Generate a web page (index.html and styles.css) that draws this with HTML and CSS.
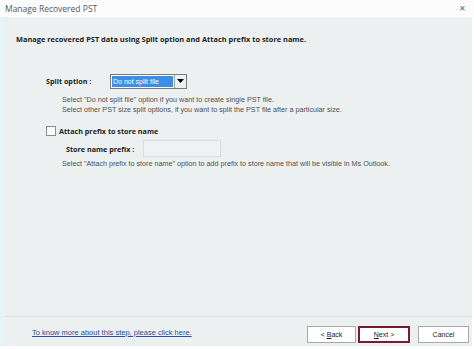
FILE: index.html
```html
<!DOCTYPE html>
<html lang="en">

<head>
    <meta charset="UTF-8">
    <meta name="viewport" content="width=device-width, initial-scale=1.0">
    <link rel="stylesheet" href="styles.css">
</head>

<body>
    <div class="window">
        <div class="titlebar">
            <span class="title">Manage Recovered PST</span>
            <span class="close">&#x2715;</span>
        </div>
        <div class="panel">
            <div class="content">
                <div class="heading">Manage recovered PST data using Split option and Attach prefix to store name.</div>

                <div class="split-row">
                    <span class="label">Split option :</span>
                    <div class="select">
                        <span class="select-value">Do not split file</span>
                        <span class="select-arrow">
                            <svg width="7" height="4" viewBox="0 0 7 4"><path d="M0 0h7L3.5 4z" fill="#000"/></svg>
                        </span>
                    </div>
                </div>
                <div class="hint hint-split">
                    Select "Do not split file" option if you want to create single PST file.<br>
                    Select other PST size split options, if you want to split the PST file after a particular size.
                </div>

                <div class="check-row">
                    <span class="checkbox"></span>
                    <span class="label">Attach prefix to store name</span>
                </div>
                <div class="prefix-row">
                    <span class="label">Store name prefix :</span>
                    <span class="input"></span>
                </div>
                <div class="hint hint-prefix">
                    Select "Attach prefix to store name" option to add prefix to store name that will be visible in Ms Outlook.
                </div>
            </div>

            <div class="footer">
                <a class="help-link" href="#">To know more about this step, please click here.</a>
                <div class="buttons">
                    <button class="btn btn-back">&lt; <u>B</u>ack</button>
                    <button class="btn btn-next"><u>N</u>ext &gt;</button>
                    <button class="btn btn-cancel">Cancel</button>
                </div>
            </div>
        </div>
    </div>
</body>

</html>
```

FILE: styles.css
```css
html,
body {
    margin: 0;
    padding: 0;
    background: #ffffff;
}

.window {
    width: 474px;
    height: 349px;
    display: flex;
    flex-direction: column;
    font-family: 'Liberation Sans', Arial, sans-serif;
}

.titlebar {
    height: 17px;
    display: flex;
    align-items: center;
    justify-content: space-between;
    padding: 0 8px 0 5px;
    background: #fcfcfc;
}

.title {
    font-family: 'Open Sans', sans-serif;
    font-size: 8.5px;
    color: #555a5e;
}

.close {
    font-size: 8px;
    color: #666666;
}

.panel {
    flex: 1;
    margin: 0 2px 3px 0;
    display: flex;
    flex-direction: column;
    background: #ecf0f1;
    border-left: 5px solid #e4f4f7;
}

.content {
    flex: 1;
    padding: 17px 0 0 11px;
}

.heading {
    font-family: 'Open Sans', sans-serif;
    font-weight: bold;
    font-size: 7.4px;
    color: #1c1c1c;
    height: 14px;
}

.label {
    font-family: 'Open Sans', sans-serif;
    font-weight: bold;
    font-size: 7.2px;
    color: #222222;
}

.split-row {
    display: flex;
    align-items: center;
    margin: 26px 0 0 30px;
    height: 14px;
}

.split-row .label {
    width: 64px;
}

.select {
    display: flex;
    width: 75px;
    height: 13px;
    border: 1px solid #7a7a7a;
    background: #ffffff;
}

.select-value {
    flex: 1;
    margin: 1px;
    padding-left: 1px;
    background: #3d8ee6;
    color: #ffffff;
    font-size: 7px;
    line-height: 11px;
}

.select-arrow {
    width: 11px;
    display: flex;
    align-items: center;
    justify-content: center;
    border-left: 1px solid #a0a0a0;
    background: #f0f0f0;
}

.hint {
    margin-left: 46px;
    font-size: 7.2px;
    line-height: 10px;
    color: #505050;
}

.hint-split {
    margin-top: 7px;
}

.check-row {
    display: flex;
    align-items: center;
    margin: 10px 0 0 30px;
    height: 12px;
    gap: 3px;
}

.checkbox {
    width: 8px;
    height: 8px;
    border: 1px solid #8a8a8a;
    background: #ffffff;
}

.prefix-row {
    display: flex;
    align-items: center;
    margin: 3px 0 0 50px;
    height: 17px;
}

.prefix-row .label {
    width: 77px;
}

.input {
    width: 76px;
    height: 15px;
    border: 1px solid #dadde0;
    background: #eff2f3;
}

.hint-prefix {
    margin-top: 2px;
}

.footer {
    height: 30px;
    display: flex;
    align-items: flex-end;
    justify-content: space-between;
    padding: 0 3px 3px 27px;
    box-sizing: border-box;
    border-top: 1px solid #dde2e4;
}

.help-link {
    margin-bottom: 6px;
    font-size: 7.5px;
    color: #2a4f9c;
    text-decoration: underline;
}

.buttons {
    display: flex;
}

.btn {
    width: 49px;
    height: 17px;
    padding: 0;
    font-family: 'Liberation Sans', Arial, sans-serif;
    font-size: 7px;
    color: #222222;
    background: #ffffff;
    border: 1px solid #a9a9a9;
}

.btn-next {
    width: 52px;
    margin-left: 2px;
    border: 2px solid #7a1c2c;
}

.btn-cancel {
    width: 51px;
    margin-left: 8px;
}
```
